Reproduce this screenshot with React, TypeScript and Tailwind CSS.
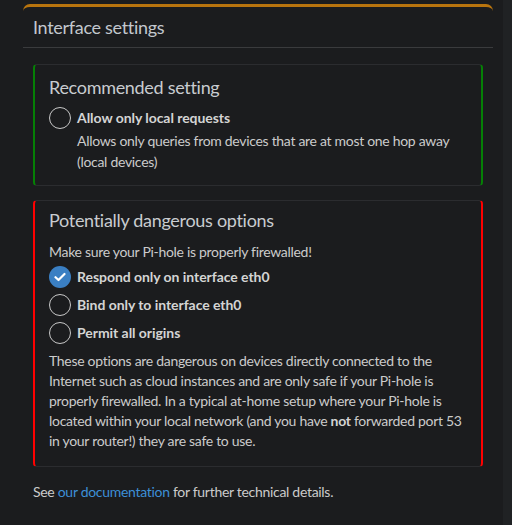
import React from "react";

function Radio({ checked }: { checked?: boolean }) {
  if (checked) {
    return (
      <span className="w-[22px] h-[22px] rounded-full bg-[#3a7fc3] flex items-center justify-center shrink-0">
        <svg width="12" height="10" viewBox="0 0 12 10" fill="none">
          <path d="M1.5 5.2 L4.5 8 L10.5 2" stroke="#ffffff" strokeWidth="2.2" strokeLinecap="round" strokeLinejoin="round" />
        </svg>
      </span>
    );
  }
  return <span className="w-[22px] h-[22px] rounded-full border-[1.5px] border-[#c8c8c8] shrink-0" />;
}

function Option({ label, checked }: { label: string; checked?: boolean }) {
  return (
    <div className="flex items-center gap-[6px] h-[28px]">
      <Radio checked={checked} />
      <span className="font-bold text-[#d4d4d4] tracking-[-0.05px]">{label}</span>
    </div>
  );
}

export default function App() {
  return (
    <div
      className="min-h-screen bg-[#1b1c1e] flex text-[14px] leading-[20px] text-[#cbcbcb] tracking-[-0.3px]"
      style={{ fontFamily: "Lato, 'Liberation Sans', sans-serif" }}
    >
      <div className="flex-1 pl-[23px] pr-[10px] pt-[4px]">
        <div className="border-t-[3px] border-[#b8740e] rounded-t-[7px]">
          <div className="h-[41px] px-[10px] flex items-center border-b border-[#3a3b3d] text-[18px] text-[#c3c8ce]">
            Interface settings
          </div>
          <div className="px-[10px] pt-[16px]">
            <div className="border-x-2 border-x-[#058005] border-y border-y-[#2b2c2f] rounded-[4px] px-[14px] pt-[11px] pb-[13px]">
              <div className="text-[18px] leading-[22px] text-[#c9ccd0] mb-[6px]">Recommended setting</div>
              <Option label="Allow only local requests" />
              <div className="pl-[28px] leading-[21px] -mt-[2px]">
                Allows only queries from devices that are at most one hop away
                <br />
                (local devices)
              </div>
            </div>
            <div className="mt-[14px] border-x-2 border-x-[#ff0000] border-y border-y-[#2b2c2f] rounded-[4px] px-[14px] pt-[8px] pb-[15px]">
              <div className="text-[18px] leading-[22px] text-[#c9ccd0] mb-[11px]">Potentially dangerous options</div>
              <div className="mb-[1px]">Make sure your Pi-hole is properly firewalled!</div>
              <Option label="Respond only on interface eth0" checked />
              <Option label="Bind only to interface eth0" />
              <Option label="Permit all origins" />
              <p className="mt-[4px]">
                These options are dangerous on devices directly connected to the
                <br />
                Internet such as cloud instances and are only safe if your Pi-hole is
                <br />
                properly firewalled. In a typical at-home setup where your Pi-hole is
                <br />
                located within your local network (and you have{" "}
                <b className="font-bold text-[#d4d4d4]">not</b> forwarded port 53
                <br />
                in your router!) they are safe to use.
              </p>
            </div>
            <p className="pt-[15px] pb-[20px]">
              See <a className="text-[#3d8fd6]">our documentation</a> for further technical details.
            </p>
          </div>
        </div>
      </div>
      <div className="w-[9px] bg-[#202224]" />
    </div>
  );
}
